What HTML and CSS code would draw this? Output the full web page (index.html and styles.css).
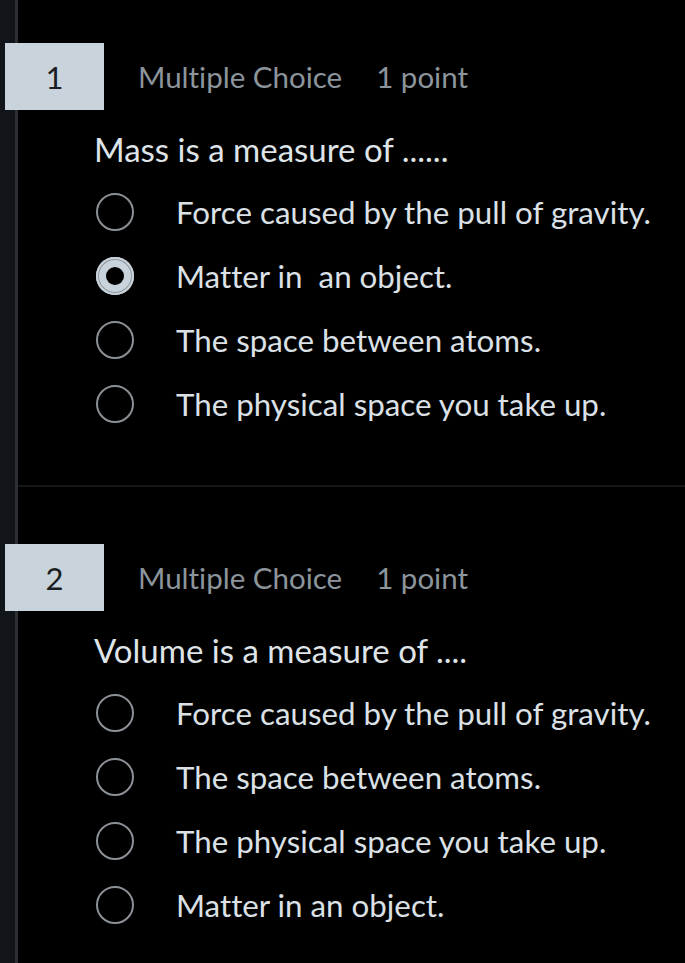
FILE: index.html
```html
<!DOCTYPE html>
<html>
<head>
<meta charset="utf-8">
<link rel="stylesheet" href="styles.css">
</head>
<body>
<div class="page">
  <section class="question">
    <div class="q-header">
      <div class="q-num">1</div>
      <span class="q-meta">Multiple Choice</span>
      <span class="q-meta">1 point</span>
    </div>
    <div class="q-prompt">Mass is a measure of ......</div>
    <ul class="options">
      <li class="option"><span class="radio"></span><span class="opt-text">Force caused by the pull of gravity.</span></li>
      <li class="option"><span class="radio selected"></span><span class="opt-text">Matter in&nbsp; an object.</span></li>
      <li class="option"><span class="radio"></span><span class="opt-text">The space between atoms.</span></li>
      <li class="option"><span class="radio"></span><span class="opt-text">The physical space you take up.</span></li>
    </ul>
  </section>
  <div class="divider"></div>
  <section class="question">
    <div class="q-header">
      <div class="q-num">2</div>
      <span class="q-meta">Multiple Choice</span>
      <span class="q-meta">1 point</span>
    </div>
    <div class="q-prompt">Volume is a measure of ....</div>
    <ul class="options">
      <li class="option"><span class="radio"></span><span class="opt-text">Force caused by the pull of gravity.</span></li>
      <li class="option"><span class="radio"></span><span class="opt-text">The space between atoms.</span></li>
      <li class="option"><span class="radio"></span><span class="opt-text">The physical space you take up.</span></li>
      <li class="option"><span class="radio"></span><span class="opt-text">Matter in an object.</span></li>
    </ul>
  </section>
</div>
</body>
</html>
```
FILE: styles.css
```css
html, body {
  margin: 0;
  padding: 0;
  background: #000;
}
body {
  font-family: Lato, "Noto Sans", sans-serif;
  font-variant-ligatures: none;
  width: 685px;
  height: 963px;
  overflow: hidden;
}
.page {
  min-height: 963px;
  background: linear-gradient(to right, #111418 0 15px, #2c3034 15px 18px, #000 18px);
  padding: 43px 0 0 5px;
  box-sizing: border-box;
}
.q-header {
  display: flex;
  align-items: center;
  gap: 34px;
  height: 67px;
}
.q-num {
  width: 99px;
  height: 67px;
  background: #c9d3dc;
  color: #1a1e22;
  font-size: 31px;
  display: flex;
  align-items: center;
  justify-content: center;
}
.q-meta {
  color: #8c949c;
  font-size: 29.5px;
}
.q-prompt {
  margin: 18px 0 0 89px;
  color: #dfe4e9;
  font-size: 33px;
  line-height: 42px;
}
.options {
  list-style: none;
  margin: 10px 0 0 0;
  padding: 0 0 0 91px;
}
.option {
  display: flex;
  align-items: center;
  height: 64px;
  gap: 42px;
}
.radio {
  width: 38px;
  height: 38px;
  box-sizing: border-box;
  border-radius: 50%;
  border: 2px solid #8b9096;
  flex: none;
  position: relative;
}
.radio.selected {
  border: none;
  background: #c9d3dc;
  box-shadow: inset 0 0 0 2px #c9d3dc, inset 0 0 0 3px #8f989f;
}
.radio.selected::after {
  content: "";
  position: absolute;
  left: 10px;
  top: 10px;
  width: 18px;
  height: 18px;
  border-radius: 50%;
  background: #000;
}
.opt-text {
  color: #dbe1e6;
  font-size: 31.3px;
}
.divider {
  height: 2px;
  background: #151617;
  margin: 49px 0 57px 13px;
}
```
